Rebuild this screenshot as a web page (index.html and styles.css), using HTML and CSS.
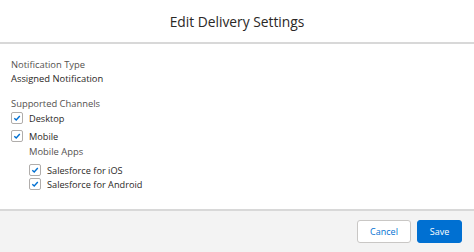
FILE: index.html
```html
<!DOCTYPE html>
<html lang="en">
<head>
    <meta charset="UTF-8">
    <title>Edit Delivery Settings</title>
    <link rel="stylesheet" href="styles.css">
</head>
<body>
<div class="modal">
    <header class="modal-header">
        <h2>Edit Delivery Settings</h2>
    </header>
    <main class="modal-body">
        <div class="field">
            <div class="label">Notification Type</div>
            <div class="value">Assigned Notification</div>
        </div>
        <div class="field">
            <div class="label head">Supported Channels</div>
            <label class="check"><span class="box"><svg viewBox="0 0 10 10"><path d="M2.3 5.2 L4.2 7 L7.8 3"/></svg></span>Desktop</label>
            <label class="check"><span class="box"><svg viewBox="0 0 10 10"><path d="M2.3 5.2 L4.2 7 L7.8 3"/></svg></span>Mobile</label>
            <div class="sub">
                <div class="label">Mobile Apps</div>
                <label class="check small"><span class="box"><svg viewBox="0 0 10 10"><path d="M2.3 5.2 L4.2 7 L7.8 3"/></svg></span>Salesforce for iOS</label>
                <label class="check small"><span class="box"><svg viewBox="0 0 10 10"><path d="M2.3 5.2 L4.2 7 L7.8 3"/></svg></span>Salesforce for Android</label>
            </div>
        </div>
    </main>
    <footer class="modal-footer">
        <button class="btn">Cancel</button>
        <button class="btn brand">Save</button>
    </footer>
</div>
</body>
</html>
```
FILE: styles.css
```css
body {
    margin: 0;
    padding: 0;
    font-family: "Open Sans", "Noto Sans", sans-serif;
    color: #3e3e3c;
    background: #fff;
}
.modal {
    width: 474px;
    height: 252px;
    display: flex;
    flex-direction: column;
}
.modal-header {
    height: 42px;
    border-bottom: 2px solid #d8d8d8;
    display: flex;
    align-items: center;
    justify-content: center;
}
.modal-header h2 {
    margin: 0;
    font-size: 13.8px;
    font-weight: 400;
    color: #2b2826;
}
.modal-body {
    flex: 1;
    padding: 14px 11px 0;
}
.field {
    margin-bottom: 11px;
}
.label {
    font-size: 9.4px;
    color: #54514f;
    line-height: 14px;
}
.label.head {
    margin-bottom: -2px;
}
.value {
    font-size: 9.4px;
    color: #2b2826;
    line-height: 14px;
}
.check {
    display: flex;
    align-items: center;
    font-size: 9.2px;
    color: #2b2826;
    height: 18px;
}
.check.small {
    height: 14px;
}
.box {
    width: 10px;
    height: 10px;
    border: 1px solid #b0adab;
    border-radius: 2px;
    margin-right: 6px;
    display: flex;
}
.box svg {
    width: 10px;
    height: 10px;
    fill: none;
    stroke: #0070d2;
    stroke-width: 1.4;
}
.sub {
    padding-left: 18px;
}
.sub .label {
    margin-bottom: 4px;
}
.modal-footer {
    height: 41px;
    border-top: 2px solid #d8d8d8;
    background: #f3f3f3;
    display: flex;
    justify-content: flex-end;
    align-items: center;
    padding-right: 12px;
    gap: 6px;
}
.btn {
    height: 23px;
    width: 54px;
    padding: 0;
    font-family: inherit;
    font-size: 9px;
    border: 1px solid #c9c7c5;
    border-radius: 3px;
    background: #fff;
    color: #0070d2;
}
.btn.brand {
    background: #0070d2;
    border-color: #0070d2;
    color: #fff;
    width: 45px;
}
```
